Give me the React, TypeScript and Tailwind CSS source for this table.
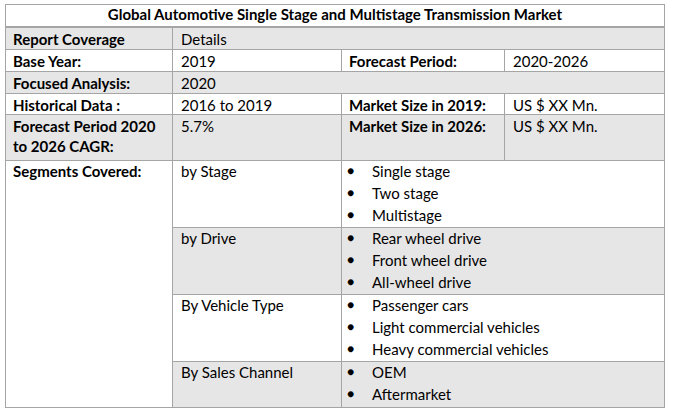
import React from "react";

const B = "border-[#a5a5a5]";

function Bullets({ items }: { items: string[] }) {
  return (
    <div className="flex flex-col -mt-[1px]">
      {items.map((t) => (
        <div key={t} className="flex h-[22px] items-center">
          <span className="w-[20px] pl-[5px] text-[12px] leading-none">●</span>
          <span className="pl-[10px]">{t}</span>
        </div>
      ))}
    </div>
  );
}

export default function App() {
  const cell = `border-r ${B} pl-[7px] pt-[1px]`;
  const scell = `border-r ${B} pl-[8px]`;
  const gray = "bg-[#e7e6e6]";
  return (
    <div className="w-[674px] h-[415px] bg-white pt-[4px] pl-[5px] text-black text-[15px] leading-[21px]" style={{ fontFamily: "Lato, 'Liberation Sans', sans-serif" }}>
      <div className={`w-[660px] border-t border-l ${B}`}>
        <div className={`h-[23px] border-r border-b-2 ${B} font-bold text-center leading-[19px]`}>
          Global Automotive Single Stage and Multistage Transmission Market
        </div>
        <div className={`grid grid-cols-[167px_169px_163px_160px]`}>
          {/* Report Coverage */}
          <div className={`${cell} ${gray} h-[22px] border-b font-bold`}>Report Coverage</div>
          <div className={`${cell} ${gray} col-span-3 h-[22px] border-b pl-[8px]`}>Details</div>
          {/* Base year */}
          <div className={`${cell} h-[22px] border-b font-bold`}>Base Year:</div>
          <div className={`${cell} h-[22px] border-b pl-[8px]`}>2019</div>
          <div className={`${cell} h-[22px] border-b font-bold`}>Forecast Period:</div>
          <div className={`${cell} h-[22px] border-b pl-[8px]`}>2020-2026</div>
          {/* Focused */}
          <div className={`${cell} ${gray} h-[22px] border-b font-bold`}>Focused Analysis:</div>
          <div className={`${cell} ${gray} col-span-3 h-[22px] border-b pl-[8px]`}>2020</div>
          {/* Historical */}
          <div className={`${cell} h-[21px] border-b font-bold`}>Historical Data :</div>
          <div className={`${cell} h-[21px] border-b pl-[8px]`}>2016 to 2019</div>
          <div className={`${cell} h-[21px] border-b font-bold`}>Market Size in 2019:</div>
          <div className={`${cell} h-[21px] border-b pl-[8px]`}>US $ XX Mn.</div>
          {/* Forecast */}
          <div className={`${cell} ${gray} h-[46px] border-b font-bold leading-[20px]`}>Forecast Period 2020<br />to 2026 CAGR:</div>
          <div className={`${cell} ${gray} h-[46px] border-b pl-[8px]`}>5.7%</div>
          <div className={`${cell} ${gray} h-[46px] border-b font-bold`}>Market Size in 2026:</div>
          <div className={`${cell} ${gray} h-[46px] border-b pl-[8px]`}>US $ XX Mn.</div>
        </div>
        <div className="grid grid-cols-[167px_169px_323px] grid-rows-[67px_67px_67px_46px]">
          <div className={`border-r ${B} pl-[7px] row-span-4 border-b font-bold`}>Segments Covered:</div>
          <div className={`${scell} border-b`}>by Stage</div>
          <div className={`border-r border-b ${B}`}><Bullets items={["Single stage", "Two stage", "Multistage"]} /></div>
          <div className={`${scell} ${gray} border-b`}>by Drive</div>
          <div className={`border-r border-b ${B} ${gray}`}><Bullets items={["Rear wheel drive", "Front wheel drive", "All-wheel drive"]} /></div>
          <div className={`${scell} border-b`}>By Vehicle Type</div>
          <div className={`border-r border-b ${B}`}><Bullets items={["Passenger cars", "Light commercial vehicles", "Heavy commercial vehicles"]} /></div>
          <div className={`${scell} ${gray} border-b`}>By Sales Channel</div>
          <div className={`border-r border-b ${B} ${gray}`}><Bullets items={["OEM", "Aftermarket"]} /></div>
        </div>
      </div>
    </div>
  );
}
